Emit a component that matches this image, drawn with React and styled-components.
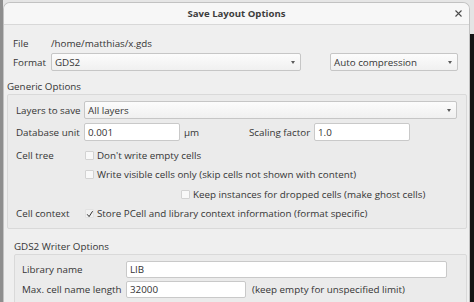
import React from "react";
import styled, { createGlobalStyle } from "styled-components";

const GlobalStyle = createGlobalStyle`
  html, body { margin: 0; padding: 0; }
  body {
    font-family: "Open Sans", "Noto Sans", sans-serif;
    font-size: 9.8px;
    color: #353535;
  }
  * { box-sizing: border-box; }
`;

const Desktop = styled.div`
  width: 474px;
  height: 302px;
  overflow: hidden;
  padding: 2px 4px 0 3px;
  background:
    linear-gradient(#e4e4e4, #e4e4e4) right top / 4px 34px no-repeat,
    linear-gradient(to right, #8e8e8e 0 3px, #e6e6e6 3px 470px, #141414 470px);
`;

const Dialog = styled.div`
  height: 100%;
  border: 1px solid #c2c2c2;
  border-bottom: none;
  border-radius: 7px 7px 0 0;
  background: #efefef;
  overflow: hidden;
`;

const TitleBar = styled.header`
  height: 22px;
  display: grid;
  grid-template-columns: 1fr auto 1fr;
  align-items: center;
  background: #f7f7f7;
  border-bottom: 1px solid #d8d8d8;
  padding: 0 7px;
`;

const Title = styled.div`
  font-weight: 700;
  font-size: 9.6px;
  color: #3d3d3d;
  grid-column: 2;
`;

const Close = styled.div`
  justify-self: end;
  display: flex;
  align-items: center;
`;

const Body = styled.div`
  padding: 10px 2px 0 3px;
`;

const TopGrid = styled.div`
  display: grid;
  grid-template-columns: 38px 250px 1fr 128px;
  grid-template-rows: 16px 18px;
  row-gap: 2px;
  align-items: center;
  margin: 0 9px 0 6px;
`;

const Path = styled.div`
  grid-column: 2 / -1;
`;

const Label = styled.span`
  white-space: nowrap;
  width: ${(p) => (p.$w ? `${p.$w}px` : "auto")};
  margin-left: ${(p) => p.$ml || 0}px;
`;

const Combo = styled.div`
  grid-column: ${(p) => p.$col || "auto"};
  height: 18px;
  display: flex;
  align-items: center;
  justify-content: space-between;
  padding: 0 5px 0 3px;
  background: linear-gradient(#fcfcfc, #f0f0f0);
  border: 1px solid #c6c6c6;
  border-radius: 2px;
  white-space: nowrap;
`;

const Arrow = styled.span`
  width: 0;
  height: 0;
  border-left: 2.5px solid transparent;
  border-right: 2.5px solid transparent;
  border-top: 3px solid #5a5a5a;
`;

const GroupTitle = styled.div`
  line-height: 14px;
  margin-top: ${(p) => p.$mt}px;
`;

const Section = styled.div`
  margin-left: ${(p) => p.$indent || 0}px;
`;

const Frame = styled.div`
  border: 1px solid #d9d9d9;
  background: #ebebeb;
  border-radius: 2px;
  padding: 6px ${(p) => p.$pr || 8}px 6px ${(p) => p.$pl || 8}px;
  display: flex;
  flex-direction: column;
`;

const FormRow = styled.div`
  display: grid;
  grid-template-columns: ${(p) => p.$label}px 1fr;
  align-items: center;
  height: ${(p) => p.$h || 16}px;
  margin-top: ${(p) => p.$mt || 0}px;
`;

const Field = styled.div`
  display: flex;
  align-items: center;
  height: 100%;
  grid-column: 2;
`;

const Input = styled.input`
  width: ${(p) => (p.$w ? `${p.$w}px` : "100%")};
  height: 100%;
  margin: 0;
  padding: 0 3px;
  border: 1px solid #c9c9c9;
  border-radius: 2px;
  background: #fff;
  font: inherit;
  color: #333;
  outline: none;
`;

const Check = styled.label`
  display: flex;
  align-items: center;
  gap: 3px;
  padding-left: ${(p) => p.$indent || 1}px;
  white-space: nowrap;
`;

const Box = styled.span`
  position: relative;
  width: 9px;
  height: 9px;
  flex: none;
  border: 1px solid ${(p) => (p.$checked ? "#e2e2e2" : "#d2d2d2")};
  background: ${(p) => (p.$checked ? "#f1f1f1" : "#f8f8f8")};
  border-radius: 1px;
`;

const Tick = styled.svg`
  position: absolute;
  left: 0px;
  top: 0px;
`;

const Hint = styled.span`
  margin-left: 6px;
  white-space: nowrap;
`;

function CheckBox({ checked, indent, children }) {
  return (
    <Check $indent={indent}>
      <Box $checked={checked}>
        {checked && (
          <Tick width="8" height="8" viewBox="0 0 8 8">
            <path d="M1.2 4.3 L3.1 6.6 L6.6 1.2" fill="none" stroke="#333" strokeWidth="1" />
          </Tick>
        )}
      </Box>
      <span>{children}</span>
    </Check>
  );
}

export default function App() {
  return (
    <>
      <GlobalStyle />
      <Desktop>
        <Dialog>
          <TitleBar>
            <Title>Save Layout Options</Title>
            <Close>
              <svg width="7" height="7" viewBox="0 0 7 7">
                <path d="M0.5 0.5 L6.5 6.5 M6.5 0.5 L0.5 6.5" stroke="#4a4a4a" strokeWidth="1.1" />
              </svg>
            </Close>
          </TitleBar>
          <Body>
            <TopGrid>
              <Label>File</Label>
              <Path>/home/matthias/x.gds</Path>
              <Label>Format</Label>
              <Combo>
                <span>GDS2</span>
                <Arrow />
              </Combo>
              <Combo $col={4}>
                <span>Auto compression</span>
                <Arrow />
              </Combo>
            </TopGrid>

            <GroupTitle $mt={9}>Generic Options</GroupTitle>
            <Frame $pr={9}>
              <FormRow $label={68} $h={18}>
                <Label>Layers to save</Label>
                <Combo>
                  <span>All layers</span>
                  <Arrow />
                </Combo>
              </FormRow>
              <FormRow $label={68} $h={18} $mt={4}>
                <Label>Database unit</Label>
                <Field>
                  <Input $w={96} readOnly value="0.001" />
                  <Label $w={65} $ml={4}>µm</Label>
                  <Label $w={65}>Scaling factor</Label>
                  <Input $w={96} readOnly value="1.0" />
                </Field>
              </FormRow>
              <FormRow $label={68} $mt={6}>
                <Label>Cell tree</Label>
                <CheckBox>Don't write empty cells</CheckBox>
              </FormRow>
              <FormRow $label={68} $mt={3.5}>
                <Field>
                  <CheckBox>Write visible cells only (skip cells not shown with content)</CheckBox>
                </Field>
              </FormRow>
              <FormRow $label={68} $mt={3.5}>
                <Field>
                  <CheckBox indent={97}>Keep instances for dropped cells (make ghost cells)</CheckBox>
                </Field>
              </FormRow>
              <FormRow $label={68} $mt={3.5}>
                <Label>Cell context</Label>
                <CheckBox checked>Store PCell and library context information (format specific)</CheckBox>
              </FormRow>
            </Frame>

            <Section $indent={7}>
              <GroupTitle $mt={11}>GDS2 Writer Options</GroupTitle>
              <Frame $pl={7} $pr={19}>
                <FormRow $label={104} $h={17}>
                  <Label>Library name</Label>
                  <Input readOnly value="LIB" />
                </FormRow>
                <FormRow $label={104} $h={17} $mt={3}>
                  <Label>Max. cell name length</Label>
                  <Field>
                    <Input $w={120} readOnly value="32000" />
                    <Hint>(keep empty for unspecified limit)</Hint>
                  </Field>
                </FormRow>
              </Frame>
            </Section>
          </Body>
        </Dialog>
      </Desktop>
    </>
  );
}
